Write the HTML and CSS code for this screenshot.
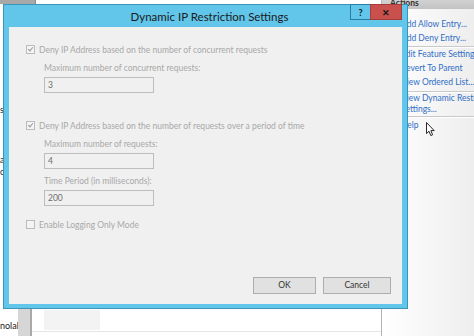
FILE: index.html
```html
<!DOCTYPE html>
<html lang="en">
<head>
    <meta charset="UTF-8">
    <title>Dynamic IP Restriction Settings</title>
    <link rel="stylesheet" href="styles.css">
</head>
<body>
<div id="desk">
    <div id="main">
        <div class="topbar"><span class="tab"></span></div>
        <div class="panes">
            <div class="tree">
                <p class="node n1">sites</p>
                <p class="node n2">al</p>
                <p class="node n3">ci</p>
                <p class="node n4">nolab</p>
            </div>
            <div class="vscroll"></div>
            <div class="list">
                <div class="list-box"></div>
            </div>
        </div>
    </div>
    <div id="actions">
        <div class="actions-head">Actions</div>
        <ul class="task-group g1">
            <li>Add Allow Entry...</li>
            <li>Add Deny Entry...</li>
        </ul>
        <ul class="task-group g2">
            <li>Edit Feature Settings...</li>
            <li>Revert To Parent</li>
            <li>View Ordered List...</li>
        </ul>
        <ul class="task-group g3">
            <li>View Dynamic Restriction<br>Settings...</li>
        </ul>
        <ul class="task-group g4">
            <li>Help</li>
        </ul>
    </div>
</div>

<div id="dialog">
    <div class="titlebar">
        <span class="title">Dynamic IP Restriction Settings</span>
        <div class="caption-btns">
            <span class="btn-help">?</span>
            <span class="btn-close">&#x2715;</span>
        </div>
    </div>
    <div class="client">
        <div class="check-row">
            <span class="checkbox checked"></span>
            <span class="check-text">Deny IP Address based on the number of concurrent requests</span>
        </div>
        <div class="field first">
            <div class="field-label">Maximum number of concurrent requests:</div>
            <div class="textbox">3</div>
        </div>

        <div class="check-row second">
            <span class="checkbox checked"></span>
            <span class="check-text">Deny IP Address based on the number of requests over a period of time</span>
        </div>
        <div class="field first">
            <div class="field-label">Maximum number of requests:</div>
            <div class="textbox">4</div>
        </div>
        <div class="field">
            <div class="field-label">Time Period (in milliseconds):</div>
            <div class="textbox">200</div>
        </div>

        <div class="check-row third">
            <span class="checkbox"></span>
            <span class="check-text">Enable Logging Only Mode</span>
        </div>

        <div class="buttons">
            <span class="button ok">OK</span>
            <span class="button cancel">Cancel</span>
        </div>
    </div>
</div>

<svg id="cursor" width="10" height="15" viewBox="0 0 10 15">
    <path d="M0.5 0.5 L0.5 11.5 L3 9.2 L4.8 13.6 L6.6 12.8 L4.9 8.6 L8.2 8.6 Z" fill="#fff" stroke="#111" stroke-width="0.9" stroke-linejoin="round"/>
</svg>
</body>
</html>
```

FILE: styles.css
```css
body, p, ul {
    margin: 0;
    padding: 0;
}

body {
    width: 474px;
    height: 336px;
    overflow: hidden;
    position: relative;
    background: #fff;
    font-family: Lato, "Noto Sans", sans-serif;
    font-size: 8.5px;
}

#desk {
    display: flex;
    height: 336px;
}

/* background IIS manager */
#main {
    width: 381px;
    display: flex;
    flex-direction: column;
}

.topbar {
    height: 4px;
    display: flex;
}

.topbar .tab {
    width: 35px;
    background: #a8a8a8;
    border-right: 1px solid #8a8a8a;
}

.panes {
    flex: 1;
    display: flex;
}

.tree {
    width: 18px;
    overflow: hidden;
    background: #fff;
    color: #222;
    white-space: nowrap;
}

.tree .node {
    height: 12px;
    line-height: 12px;
}

.tree .n1 {
    margin-top: 100px;
}

.tree .n2 {
    margin-top: 38px;
}

.tree .n4 {
    margin-top: 142px;
    font-size: 9px;
}

.vscroll {
    width: 12px;
    background: #d6d6d6;
    border-right: 2px solid #a9a9a9;
}

.list {
    flex: 1;
    padding: 0 11px 1px 12px;
    display: flex;
    flex-direction: column;
    justify-content: flex-end;
    border-bottom: 1px solid #e6e6e6;
    margin-bottom: 4px;
}

.list-box {
    width: 56px;
    height: 20px;
    background: #f3f3f3;
}

#actions {
    width: 92px;
    border-left: 1px solid #b4b4b4;
    background: linear-gradient(to right, #fff, #eeeeee);
}

.actions-head {
    height: 9px;
    line-height: 7px;
    padding-left: 8px;
    background: linear-gradient(to bottom, #d2d2d2, #c2c2c2);
    font-weight: bold;
    color: #333;
    overflow: hidden;
}

.task-group {
    list-style: none;
    border-bottom: 1px solid #c9c9c9;
    box-shadow: 0 1px 0 #fff;
}

.task-group li {
    padding-left: 19px;
    line-height: 14px;
    color: #2f6dc6;
    white-space: nowrap;
}

.g1 {
    padding: 8px 0 1px 0;
}

.g2 {
    padding: 0 0 2px 0;
}

.g3 {
    padding: 1px 0 1px 0;
}

.g3 li {
    line-height: 11px;
}

.g4 {
    padding-top: 1px;
    border-bottom: none;
    box-shadow: none;
}

/* dialog on top */
#dialog {
    position: absolute;
    left: 3px;
    top: 4px;
    width: 393px;
    height: 299px;
    border: 1px solid #3b94b9;
    background: #62c5ea;
    display: flex;
    flex-direction: column;
    padding: 0 5px 4px 5px;
}

.titlebar {
    height: 22px;
    position: relative;
    display: flex;
    align-items: center;
    justify-content: center;
}

.title {
    font-size: 11.5px;
    color: #1b1b1b;
    padding-left: 8px;
    padding-top: 1px;
}

.caption-btns {
    position: absolute;
    right: 0;
    top: -1px;
    display: flex;
    height: 16px;
}

.btn-help {
    width: 19px;
    border: 1px solid #2b7ea3;
    border-right: none;
    text-align: center;
    font-weight: bold;
    font-size: 9px;
    line-height: 15px;
    color: #111;
}

.btn-close {
    width: 30px;
    background: #c9504c;
    border: 1px solid #a63d3a;
    text-align: center;
    font-weight: bold;
    font-size: 9px;
    line-height: 15px;
    color: #1a1a1a;
}

.client {
    flex: 1;
    background: #f0f0f0;
    display: flex;
    flex-direction: column;
    padding: 18px 11px 10px 17px;
    color: #a8a8a8;
}

.check-row {
    display: flex;
    align-items: center;
    height: 9px;
}

.check-row.second {
    margin-top: 28px;
}

.check-row.third {
    margin-top: 14px;
}

.checkbox {
    width: 7px;
    height: 7px;
    border: 1px solid #bcbcbc;
    background: #f4f4f4;
    position: relative;
    margin-right: 4px;
    flex: none;
}

.checkbox.checked::after {
    content: "";
    position: absolute;
    left: 2px;
    top: 0;
    width: 2px;
    height: 4px;
    border: solid #9a9a9a;
    border-width: 0 1px 1px 0;
    transform: rotate(40deg);
}

.check-text {
    line-height: 12px;
}

.field {
    padding-left: 18px;
    margin-top: 6px;
}

.field.first {
    margin-top: 8px;
}

.field-label {
    line-height: 12px;
}

.textbox {
    width: 105px;
    height: 14px;
    line-height: 14px;
    margin-top: 3px;
    padding-left: 3px;
    border: 1px solid #bdbdbd;
    background: #f0f0f0;
    color: #6e6e6e;
}

.buttons {
    margin-top: auto;
    display: flex;
    justify-content: flex-end;
    gap: 7px;
}

.button {
    height: 15px;
    line-height: 15px;
    text-align: center;
    background: #e1e1e1;
    border: 1px solid #adadad;
    color: #333;
}

.button.ok {
    width: 61px;
}

.button.cancel {
    width: 66px;
}

#cursor {
    position: absolute;
    left: 426px;
    top: 122px;
}
```
